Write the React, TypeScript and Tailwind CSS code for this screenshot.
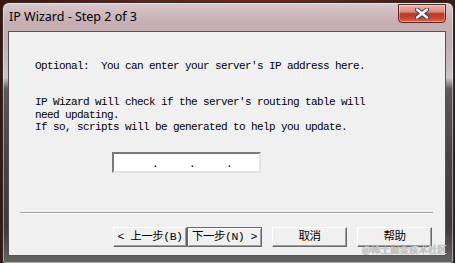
import React from "react";

const mono = { fontFamily: '"Liberation Mono", "Noto Sans CJK SC", monospace' };

function Btn({ label, w, def }: { label: string; w: string; def?: boolean }) {
  return (
    <div
      className={`${w} h-[20px] flex items-center justify-center bg-[#f0f0f0] text-[11.5px] tracking-[-0.5px] text-black border ${
        def
          ? "border-[#696969] shadow-[inset_1px_1px_0_#ffffff,inset_-1px_-1px_0_#a0a0a0]"
          : "border-t-white border-l-white border-b-[#696969] border-r-[#696969] shadow-[inset_-1px_-1px_0_#a0a0a0]"
      }`}
      style={mono}
    >
      {label}
    </div>
  );
}

export default function App() {
  return (
    <div className="relative w-[455px] h-[263px] overflow-hidden bg-[linear-gradient(90deg,#3a1610_0%,#5a2418_30%,#6a2a1a_60%,#3a1a12_100%)]">
      <div className="absolute left-[2px] top-[2px] w-[452px] h-[262px] rounded-t-[7px] rounded-b-[3px] border border-[#2e2e2e] shadow-[inset_0_0_0_1px_rgba(255,255,255,0.45)] bg-[linear-gradient(180deg,#d9c8ca_0px,#c6aeb2_20px,#bfb0b2_40px,#c9c4c4_75px,#5e5858_86px,#454343_160px,#3c3a3a_225px,#6b6664_262px)]">
        <div className="h-[28px] pl-[6px] pt-[6px] text-[12.5px] leading-[16px] text-black" style={{ fontFamily: '"Noto Sans", sans-serif' }}>
          IP Wizard - Step 2 of 3
        </div>
        <div className="absolute left-[395px] top-[1px] w-[48px] h-[19px] rounded-b-[4px] border border-[#5a2a24] bg-[linear-gradient(180deg,#eab4aa_0%,#dc8a7c_40%,#c2321c_52%,#c84a30_80%,#d8704c_100%)] flex items-center justify-center shadow-[inset_0_0_0_1px_rgba(255,255,255,0.35)]">
          <svg width="14" height="11" viewBox="0 0 14 11">
            <path d="M2 1.5 L12 9.5 M12 1.5 L2 9.5" stroke="#3a3a48" strokeWidth="4.2" strokeLinecap="round" />
            <path d="M2 1.5 L12 9.5 M12 1.5 L2 9.5" stroke="#ffffff" strokeWidth="2.4" strokeLinecap="round" />
          </svg>
        </div>
        <div className="ml-[5px] mr-[7px] h-[225px] bg-[#f0f0f0] border border-[#555555] flex flex-col">
          <div className="pl-[26px] pt-[28px] text-[11px] tracking-[-0.6px] leading-[13px] text-black whitespace-pre" style={mono}>
            Optional:  You can enter your server's IP address here.
          </div>
          <div className="pl-[26px] mt-[23px] text-[11px] tracking-[-0.6px] leading-[12.5px] text-black whitespace-pre" style={mono}>
            <div>IP Wizard will check if the server's routing table will</div>
            <div>need updating.</div>
            <div>If so, scripts will be generated to help you update.</div>
          </div>
          <div className="ml-[103px] mt-[18px] w-[149px] h-[21px] bg-white border-2 border-t-[#7a7a7a] border-l-[#7a7a7a] border-b-[#e4e4e4] border-r-[#e4e4e4] relative text-[11px] leading-[13px] text-black" style={mono}>
            <span className="absolute left-[38px] top-[4px]">.</span>
            <span className="absolute left-[75px] top-[4px]">.</span>
            <span className="absolute left-[112px] top-[4px]">.</span>
          </div>
          <div className="ml-[11px] mt-[39px] w-[413px] h-[2px] border-t border-t-[#a0a0a0] border-b border-b-white" />
          <div className="mt-[13px] flex">
            <div className="ml-[104px]">
              <Btn label="< 上一步(B)" w="w-[74px]" />
            </div>
            <Btn label="下一步(N) >" w="w-[75px]" def />
            <div className="ml-[10px]">
              <Btn label="取消" w="w-[75px]" />
            </div>
            <div className="ml-[10px]">
              <Btn label="帮助" w="w-[75px]" />
            </div>
          </div>
        </div>
      </div>
      <div className="absolute left-[362px] top-[243px] text-[9.5px] leading-[12px] text-[#d8d8d8] [text-shadow:0_0_1px_#555]" style={{ fontFamily: '"Noto Sans CJK SC", sans-serif' }}>
        @稀土掘金技术社区
      </div>
    </div>
  );
}
